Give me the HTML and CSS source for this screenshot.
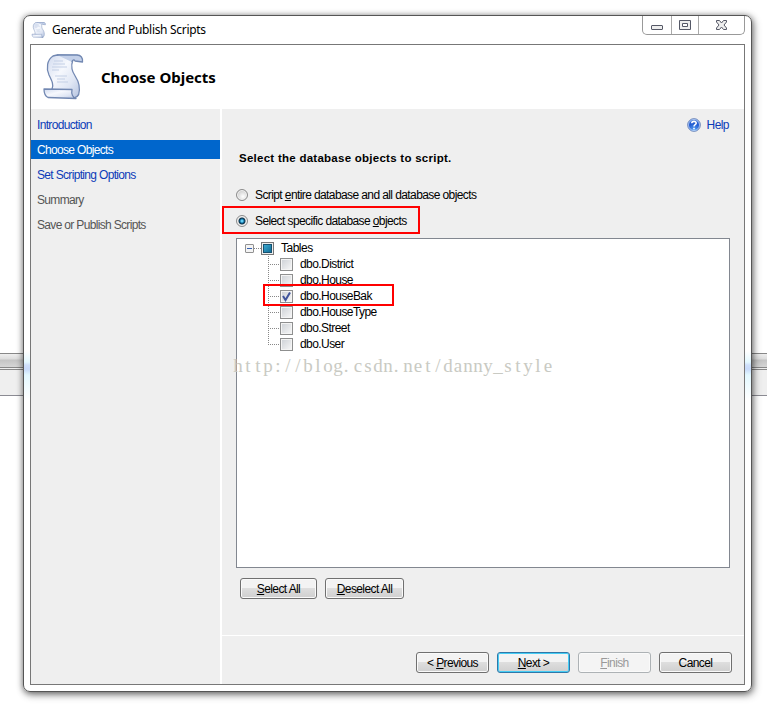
FILE: index.html
```
<!DOCTYPE html>
<html lang="en">
<head>
<meta charset="utf-8">
<title>Generate and Publish Scripts</title>
<link rel="stylesheet" href="styles.css">
</head>
<body>
<svg width="0" height="0" class="defs">
  <defs>
    <linearGradient id="paper" x1="0" y1="0" x2="1" y2="1"><stop offset="0" stop-color="#cfd9ee"/><stop offset=".4" stop-color="#f6f8fd"/><stop offset=".7" stop-color="#dfe6f4"/><stop offset="1" stop-color="#b4c2df"/></linearGradient>
    <radialGradient id="ball" cx=".5" cy=".9" r=".9"><stop offset="0" stop-color="#58a4f5"/><stop offset=".6" stop-color="#2058cf"/><stop offset="1" stop-color="#4c83dc"/></radialGradient>
    <symbol id="scroll" viewBox="0 0 42 46">
      <g fill="url(#paper)" stroke="#7288b2" stroke-width="1.3" stroke-linejoin="round">
        <path d="M10 2C4 6 3 14 6 21C9 27 11 31 9 35L31 44C36 43 37 37 36 31C35 24 30 21 29 15C28 9 30 3 35 1.500L14 1Z"/>
        <path d="M14 1H34C38 1 40 4 39.500 8L32 7C31 5 29 6 29 8" fill="#c3d0e9"/>
        <path d="M1 35L29 35.500C28 40 30 44 33 44.500L5 43.500C2 42 1 39 1 35Z"/>
      </g>
      <path d="M11 7H20M10 10H22M9 13H24M9 16H16M12 22H24M14 25H22M14 28H25" stroke="#c3cfe5" stroke-width="1.200"/>
    </symbol>
  </defs>
</svg>
<main class="window">
  <header class="titlebar">
    <svg class="title-icon"><use href="#scroll"/></svg>
    <span class="title">Generate and Publish Scripts</span>
    <div class="controls">
      <svg width="28" height="18"><rect x="8.500" y="9.500" width="11" height="4" rx=".5" fill="#eee" stroke="#555866"/></svg>
      <svg width="27" height="18" class="split"><path d="M7.500 4.500h11v9h-11z M10.500 7.500h5v3h-5z" fill="#eee" fill-rule="evenodd" stroke="#555866"/></svg>
      <svg width="47" height="18" class="split"><path d="M17.500 4.500h3l2 2.500 2-2.500h3v1.500L25 9l2.500 3v1.500h-3l-2-2.500-2 2.500h-3V12L20 9l-2.500-3z" fill="#eee" stroke="#555866"/></svg>
    </div>
  </header>
  <section class="frame">
    <div class="banner"><svg class="banner-icon"><use href="#scroll"/></svg><h1>Choose Objects</h1></div>
    <div class="columns">
      <nav>
        <a>Introduction</a>
        <a class="current">Choose Objects</a>
        <a>Set Scripting Options</a>
        <a class="off">Summary</a>
        <a class="off">Save or Publish Scripts</a>
      </nav>
      <div class="content">
        <div class="page">
          <div class="help"><svg width="14" height="14" viewBox="0 0 14 14"><circle cx="7" cy="7" r="6.400" fill="url(#ball)" stroke="#8597bd"/><circle cx="7" cy="7" r="5.500" fill="none" stroke="#cfe0fb" stroke-width=".7"/><path d="M4.800 5.300C4.800 2.700 9.300 2.800 9.200 5.200C9.100 6.700 7 6.600 7 8.400M7 9.700V11.200" fill="none" stroke="#fff" stroke-width="1.600"/></svg><span>Help</span></div>
          <h2>Select the database objects to script.</h2>
          <div class="option"><i class="radio"></i><span>Script <u>e</u>ntire database and all database objects</span></div>
          <div class="option picked"><i class="radio on"></i><span>Select specific database <u>o</u>bjects</span></div>
          <div class="tree">
            <div class="root"><i class="toggle"></i><i class="dots"></i><i class="check mixed"></i><span>Tables</span></div>
            <ul>
              <li><i class="dots"></i><i class="check"></i><span>dbo.District</span></li>
              <li><i class="dots"></i><i class="check"></i><span>dbo.House</span></li>
              <li><i class="dots"></i><i class="check"><svg width="11" height="11"><path d="M2 5L4.500 9L9 1.500" fill="none" stroke="#40549b" stroke-width="2"/></svg></i><span>dbo.HouseBak</span></li>
              <li><i class="dots"></i><i class="check"></i><span>dbo.HouseType</span></li>
              <li><i class="dots"></i><i class="check"></i><span>dbo.Street</span></li>
              <li><i class="dots"></i><i class="check"></i><span>dbo.User</span></li>
            </ul>
            <div class="mark"></div>
            <svg class="watermark" width="330" height="28"><text y="19" x="5 15 25 35 45 55 65 75 85 95 105 113 125 135 145 155 163 175 185 195 205 215 225 235 245 255 265 275 285 295 305 315">http://blog.csdn.net/danny_style</text></svg>
          </div>
          <div class="row"><button class="b-sel"><span><u>S</u>elect All</span></button><button class="b-desel"><span><u>D</u>eselect All</span></button></div>
        </div>
        <footer>
          <button><span>&lt; <u>P</u>revious</span></button>
          <button class="primary"><span><u>N</u>ext &gt;</span></button>
          <button class="disabled"><span><u>F</u>inish</span></button>
          <button><span>Cancel</span></button>
        </footer>
      </div>
    </div>
  </section>
</main>
</body>
</html>
```
FILE: styles.css
```
* { box-sizing: border-box; }
html { background: #fff; }
body {
  margin: 0; height: 711px; padding: 15px 15px 19px 23px; overflow: hidden;
  font: 12px/16px "Liberation Sans", sans-serif; letter-spacing: -.6px; color: #000;
  background: linear-gradient(#fff 353px, #888 353px 354px, #eee 354px, #ddd 359px, #c4c4c4 360px, #d6d6d6 367px, #888 367px 368px, #eee 368px 369px, #888 369px 370px, #efefef 370px 395px, #8b8b93 395px 396px, #fff 396px);
}
.defs { position: absolute; }
.window {
  height: 677px; border: 1px solid #555; border-radius: 7px; padding: 0 6px 6px;
  background: linear-gradient(#fff 335px, #e4f8ff 346px, #cfe0fb 349px, #c8dafa 353px, #e3f8ff 359px, #fff 384px);
  box-shadow: 0 1px 6px rgba(0,0,0,.5), 2px 3px 8px rgba(0,0,0,.3);
}
.titlebar { height: 28px; display: flex; align-items: flex-start; background: #fff; padding-left: 1px; border-radius: 6px; }
.title-icon { width: 16px; height: 16px; margin-top: 6px; }
.title { font: 12px/18px "Noto Sans", sans-serif; letter-spacing: -.31px; margin: 5px 0 0 5px; white-space: nowrap; }
.controls { margin-left: auto; height: 19px; display: flex; border: 1px solid #999; border-top: 0; border-radius: 0 0 5px 5px; }
.controls svg { display: block; }
.controls svg:last-child { width: 46px; }
.split { border-left: 1px solid #aaa; }
.frame { height: 641px; border: 1px solid #777; background: #fff; }
.banner { height: 64px; display: flex; align-items: center; }
.banner-icon { width: 42px; height: 46px; margin-left: 12px; }
h1 { font: bold 15px/20px "Noto Sans", sans-serif; letter-spacing: -.02px; margin: 0 0 0 16px; }
.columns { height: 575px; display: grid; grid-template-columns: 189px 1fr; gap: 2px; }
nav { background: #efefef; padding-top: 6px; letter-spacing: -.67px; }
nav a { display: block; height: 19px; line-height: 20px; margin-bottom: 6px; padding-left: 6px; color: #0c3bb8; white-space: nowrap; }
nav .current { background: #0066cc; color: #fff; }
nav .off { color: #555; }
.content { background: #efefef; display: flex; flex-direction: column; }
.page { height: 526px; padding: 8px 14px 0; }
.help { display: flex; justify-content: flex-end; align-items: center; height: 16px; color: #0c3bb8; padding-right: 1px; letter-spacing: -.55px; }
.help svg { margin-right: 6px; }
h2 { font: bold 11.500px/16px "Liberation Sans", sans-serif; letter-spacing: .26px; margin: 17px 0 0 3px; white-space: nowrap; }
.option { display: flex; align-items: center; height: 28px; width: 270px; margin: 15px 0 0 -14px; padding-left: 14px; white-space: nowrap; }
.option.picked { width: 198px; margin-top: -3px; border: 2px solid #f00; padding: 2px 0 0 12px; }
.radio { width: 12px; height: 12px; border: 1px solid #8a8a8a; border-radius: 50%; margin-right: 7px; background: radial-gradient(circle at 60% 65%, #fff, #c8c8c8 80%); box-shadow: inset 0 0 0 1px #f3f3f3; }
.radio.on { background: radial-gradient(circle, #64d0f5 0 1px, #08679b 2px, #123448 3px, #e5e5e5 4px); }
.tree { position: relative; height: 330px; width: 494px; margin-top: 4px; border: 1px solid #828790; background: #fff; padding: 1px 0 0 8px; letter-spacing: -.57px; }
.root, li { display: flex; align-items: center; height: 16px; white-space: nowrap; }
.root { letter-spacing: -.5px; }
.toggle { width: 9px; height: 9px; border: 1px solid #919191; border-radius: 1px; background: linear-gradient(#345fb0, #345fb0) 1px 3px / 5px 1px no-repeat, #f4f4f4; }
.dots { height: 1px; width: 7px; background: repeating-linear-gradient(90deg, #888 0 1px, transparent 1px 2px); }
ul { margin: 0 0 0 23px; padding: 0; list-style: none; height: 89px; background: repeating-linear-gradient(#888 0 1px, transparent 1px 2px) 0 0 / 1px 89px no-repeat; }
li .dots { width: 12px; }
.check { width: 13px; height: 13px; border: 1px solid #8e8f8f; margin-right: 7px; background: linear-gradient(135deg, #ccd0d5, #f8f8f8); box-shadow: inset 0 0 0 1px #f4f4f4; }
.check svg { display: block; }
.mixed { background: linear-gradient(135deg, #45b8df, #075d88); border-color: #777; box-shadow: inset 0 0 0 1px #eee, inset 0 0 0 2px #17516f; }
.mark { position: absolute; left: 26px; top: 45px; width: 131px; height: 22px; border: 2px solid #f00; }
.watermark { position: absolute; left: -4px; top: 114px; }
.watermark text { font: 19px "Liberation Serif", serif; letter-spacing: 0; text-anchor: middle; fill: #c9cac3; }
.row { display: flex; gap: 8px; margin: 10px 0 0 4px; }
button { width: 73px; height: 21px; padding: 1px 0 0; font: inherit; letter-spacing: inherit; line-height: 17px; border: 1px solid #707070; border-radius: 3px; background: linear-gradient(#f3f3f3 0 48%, #dedede 50%, #cfcfcf); box-shadow: inset 0 0 0 1px #fafafa; color: #000; white-space: nowrap; }
.b-sel { width: 77px; }
.b-desel { width: 79px; }
.primary { border-color: #3078a8; box-shadow: inset 0 0 0 1px #45cdf5; }
.disabled { border-color: #adb2b5; background: #f4f4f4; color: #999; }
u { text-underline-offset: 1px; text-decoration-thickness: 1px; }
footer { height: 49px; border-top: 1px solid #fff; display: flex; justify-content: flex-end; gap: 8px; padding: 16px 12px 0 0; }
```
